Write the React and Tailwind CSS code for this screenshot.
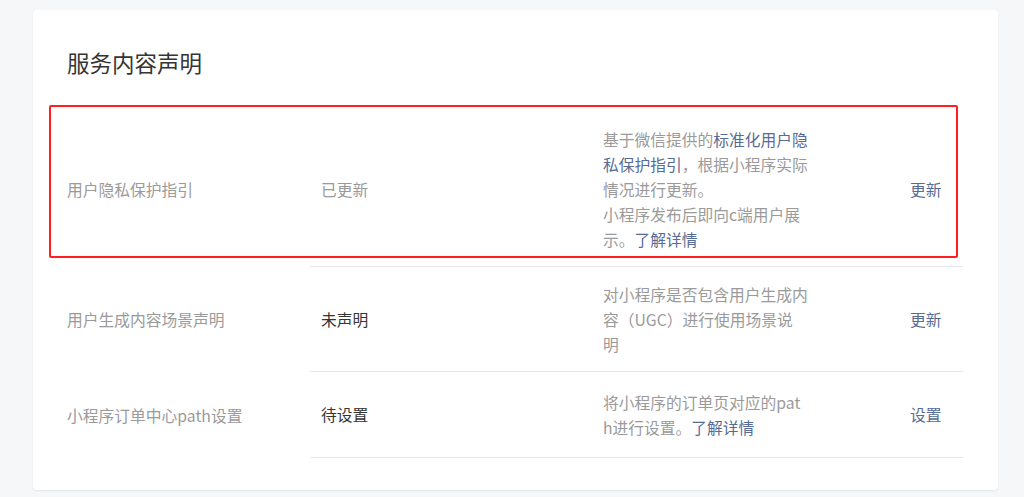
const rows = [
  {
    label: '用户隐私保护指引',
    status: '已更新',
    statusMuted: true,
    desc: (
      <>
        基于微信提供的<a className="text-[#576b95]">标准化用户隐私保护指引</a>，根据小程序实际情况进行更新。
        <br />
        小程序发布后即向c端用户展示。<a className="text-[#576b95]">了解详情</a>
      </>
    ),
    action: '更新',
  },
  {
    label: '用户生成内容场景声明',
    status: '未声明',
    desc: (
      <>
        对小程序是否包含用户生成内容（UGC）进行使用场景说
        <br />明
      </>
    ),
    action: '更新',
  },
  {
    label: '小程序订单中心path设置',
    status: '待设置',
    desc: (
      <>
        将小程序的订单页对应的path进行设置。<a className="text-[#576b95]">了解详情</a>
      </>
    ),
    action: '设置',
  },
]

const App = () => {
  return (
    <div
      className="min-h-[497px] bg-[#f6f7f9] pt-[10px] pl-[33px]"
      style={{ fontFamily: '"Noto Sans CJK SC", "Noto Sans", sans-serif' }}
    >
      <div className="relative w-[965px] h-[480px] rounded-[4px] bg-white shadow-[0_1px_2px_rgba(0,0,0,0.08)] pt-[36px] pl-[34px] pr-[35px]">
        <h2 className="text-[22.5px] leading-[32px] text-[#353535] font-normal">服务内容声明</h2>

        <div className="mt-[34px] text-[15.75px] leading-[25px]">
          {rows.map((row) => (
            <div key={row.label} className="flex">
              <div className="w-[243px] shrink-0 flex items-center text-[#9a9a9a]">{row.label}</div>
              <div className="flex flex-1 items-center min-h-[86px] py-[14.5px] border-b border-[#e7e7eb]">
                <div className={row.statusMuted ? 'w-[282px] shrink-0 pl-[11px] text-[#9a9a9a]' : 'w-[282px] shrink-0 pl-[11px] text-[#353535]'}>
                  {row.status}
                </div>
                <div className="w-[318px] shrink-0 pl-[11px]">
                  <p className="w-[206px] break-all text-[#9a9a9a]">{row.desc}</p>
                </div>
                <a className="text-[#576b95]">{row.action}</a>
              </div>
            </div>
          ))}
        </div>

        {/* highlight around the first row */}
        <div className="absolute left-[16px] top-[95px] w-[909px] h-[153px] border-2 border-[#ff1f1f] rounded-[2px] pointer-events-none" />
      </div>
    </div>
  )
}
export default App
